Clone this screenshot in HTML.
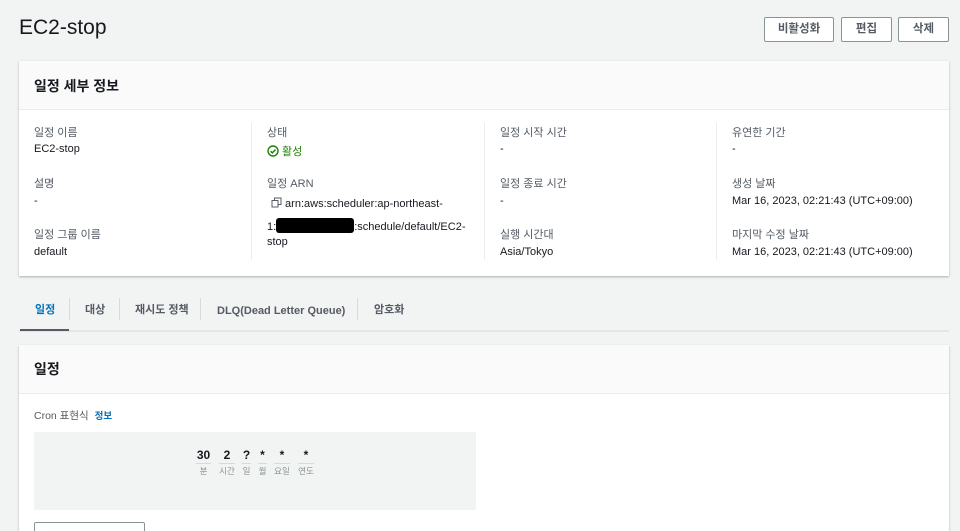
<!DOCTYPE html>
<html><head><meta charset="utf-8"><style>
*{margin:0;padding:0;box-sizing:border-box}
html,body{width:960px;height:531px;overflow:hidden}
body{background:#f2f3f3;font-family:"Liberation Sans","Noto Sans CJK KR",sans-serif;color:#16191f;position:relative}
.a{position:absolute;white-space:nowrap}
.btn{position:absolute;top:17px;height:25px;border:1px solid #879596;background:#fff;border-radius:2px;font-size:11.5px;font-weight:bold;color:#545b64;text-align:center;line-height:23px}
.card{position:absolute;left:19px;width:930px;background:#fff;box-shadow:0 1px 2px rgba(0,28,36,.3)}
.hd{background:#fafafa;border-bottom:1px solid #eaeded;height:49px}
.lb{font-size:11px;color:#545b64}
.v{font-size:11px;color:#16191f}
.vl{position:absolute;width:1px;background:#eaeded}
.tab{position:absolute;top:302px;height:16px;line-height:16px;font-size:11px;font-weight:bold;color:#545b64}
.ts{position:absolute;top:298px;width:1px;height:22px;background:#d5dbdb}
.cn{position:absolute;text-align:center;font-size:12px;font-weight:bold}
.cl{position:absolute;text-align:center;font-size:8.5px;color:#879596;border-top:1px solid #d5dbdb;top:463px;padding-top:1px}
</style></head><body>
<div class="a" style="left:19px;top:16px;font-size:21px">EC2-stop</div>
<div class="btn" style="left:764px;width:70px">비활성화</div>
<div class="btn" style="left:841px;width:51px">편집</div>
<div class="btn" style="left:898px;width:51px">삭제</div>

<div class="card" style="top:61px;height:215px"><div class="hd"></div></div>
<div class="a" style="left:34px;top:76px;font-size:14px;font-weight:bold">일정 세부 정보</div>
<div class="vl" style="left:251px;top:123px;height:137px"></div>
<div class="vl" style="left:484px;top:123px;height:137px"></div>
<div class="vl" style="left:716px;top:123px;height:137px"></div>

<div class="a lb" style="left:34px;top:124px">일정 이름</div>
<div class="a v" style="left:34px;top:143px">EC2-stop</div>
<div class="a lb" style="left:34px;top:175px">설명</div>
<div class="a v" style="left:34px;top:195px">-</div>
<div class="a lb" style="left:34px;top:226px">일정 그룹 이름</div>
<div class="a v" style="left:34px;top:246px">default</div>

<div class="a lb" style="left:267px;top:124px">상태</div>
<div class="a v" style="left:267px;top:143px;color:#1d8102"><svg width="12" height="12" viewBox="0 0 12 12" style="vertical-align:-2px"><circle cx="6" cy="6" r="5" fill="none" stroke="#1d8102" stroke-width="1.4"/><path d="M3.5 6.2l1.8 1.7 3.2-3.4" fill="none" stroke="#1d8102" stroke-width="1.4"/></svg> 활성</div>
<div class="a lb" style="left:267px;top:175px">일정 ARN</div>
<div class="a v" style="left:271px;top:197px"><svg width="11" height="11" viewBox="0 0 11 11" style="vertical-align:-1px"><rect x="1" y="3.5" width="6" height="6.5" fill="none" stroke="#545b64"/><path d="M3.5 3.5V1H10v6.5H7" fill="none" stroke="#545b64"/></svg> arn:aws:scheduler:ap-northeast-</div>
<div class="a v" style="left:267px;top:218px">1:<span style="display:inline-block;width:78px;height:15px;background:#000;border-radius:3px;vertical-align:-3px"></span>:schedule/default/EC2-</div>
<div class="a v" style="left:267px;top:236px">stop</div>

<div class="a lb" style="left:500px;top:124px">일정 시작 시간</div>
<div class="a v" style="left:500px;top:143px">-</div>
<div class="a lb" style="left:500px;top:175px">일정 종료 시간</div>
<div class="a v" style="left:500px;top:195px">-</div>
<div class="a lb" style="left:500px;top:226px">실행 시간대</div>
<div class="a v" style="left:500px;top:246px">Asia/Tokyo</div>

<div class="a lb" style="left:732px;top:124px">유연한 기간</div>
<div class="a v" style="left:732px;top:143px">-</div>
<div class="a lb" style="left:732px;top:175px">생성 날짜</div>
<div class="a v" style="left:732px;top:195px">Mar 16, 2023, 02:21:43 (UTC+09:00)</div>
<div class="a lb" style="left:732px;top:226px">마지막 수정 날짜</div>
<div class="a v" style="left:732px;top:246px">Mar 16, 2023, 02:21:43 (UTC+09:00)</div>

<div class="a" style="left:19px;top:330px;width:930px;height:2px;background:#e3e6e6"></div>
<div class="a" style="left:20px;top:329px;width:49px;height:2px;background:#545b64"></div>
<div class="tab" style="left:35px;color:#0073bb">일정</div>
<div class="ts" style="left:69px"></div>
<div class="tab" style="left:85px">대상</div>
<div class="ts" style="left:119px"></div>
<div class="tab" style="left:135px">재시도 정책</div>
<div class="ts" style="left:200px"></div>
<div class="tab" style="left:217px;top:303px">DLQ(Dead Letter Queue)</div>
<div class="ts" style="left:357px"></div>
<div class="tab" style="left:374px">암호화</div>

<div class="card" style="top:345px;height:186px"><div class="hd"></div></div>
<div class="a" style="left:34px;top:359px;font-size:14px;font-weight:bold">일정</div>
<div class="a" style="left:34px;top:408px;font-size:10.5px;color:#545b64">Cron 표현식 <span style="color:#0073bb;font-weight:bold;font-size:9.5px;margin-left:3px">정보</span></div>
<div class="a" style="left:34px;top:432px;width:442px;height:78px;background:#f2f3f3"></div>
<div class="cn" style="left:196px;top:448px;width:15px">30</div>
<div class="cn" style="left:219px;top:448px;width:16px">2</div>
<div class="cn" style="left:242px;top:448px;width:9px">?</div>
<div class="cn" style="left:258px;top:448px;width:9px">*</div>
<div class="cn" style="left:274px;top:448px;width:16px">*</div>
<div class="cn" style="left:298px;top:448px;width:16px">*</div>
<div class="cl" style="left:196px;width:15px">분</div>
<div class="cl" style="left:219px;width:16px">시간</div>
<div class="cl" style="left:242px;width:9px">일</div>
<div class="cl" style="left:258px;width:9px">월</div>
<div class="cl" style="left:274px;width:16px">요일</div>
<div class="cl" style="left:298px;width:16px">연도</div>
<div class="a" style="left:34px;top:522px;width:111px;height:20px;border:1px solid #879596;border-radius:2px;background:#fff"></div>
</body></html>
